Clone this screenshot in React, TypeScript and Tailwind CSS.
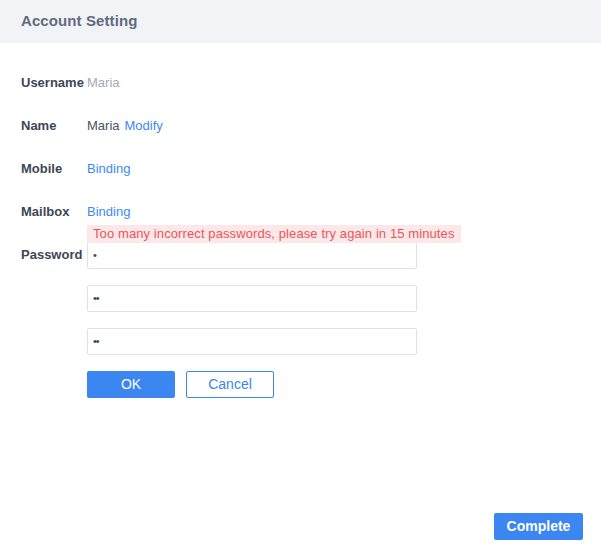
import React from "react";

const font = { fontFamily: '"Liberation Sans", Arial, sans-serif' };

function Row({ label, children }: { label: string; children: React.ReactNode }) {
  return (
    <div className="flex items-center h-[43px] text-[13px]">
      <span className="min-w-[66px] font-bold text-[#3d4656] whitespace-nowrap">{label}</span>
      {children}
    </div>
  );
}

function PasswordBox({ dots }: { dots: string }) {
  return (
    <div className="w-[330px] h-[27px] border border-[#dfe2e8] rounded-[2px] bg-white flex items-center px-[5px] text-[11px] text-[#3d4656] tracking-[-1px]">
      {dots}
    </div>
  );
}

export default function App() {
  return (
    <div className="w-[601px] h-[547px] bg-white flex flex-col" style={font}>
      <div className="h-[43px] bg-[#f2f3f7] flex items-center px-[21px]">
        <h1 className="text-[15px] font-bold text-[#5f6b7e] tracking-[0.1px]">Account Setting</h1>
      </div>

      <div className="flex-1 px-[21px] pt-[18px]">
        <Row label="Username">
          <span className="text-[#a3aab6]">Maria</span>
        </Row>
        <Row label="Name">
          <span className="text-[#4a5263]">Maria</span>
          <span className="text-[#3d8af2] ml-[5px]">Modify</span>
        </Row>
        <Row label="Mobile">
          <span className="text-[#3d8af2]">Binding</span>
        </Row>
        <Row label="Mailbox">
          <span className="text-[#3d8af2]">Binding</span>
        </Row>

        <div className="flex mt-[9px] text-[13px]">
          <span className="w-[66px] h-[26px] flex items-center font-bold text-[#3d4656]">Password</span>
          <div className="flex flex-col gap-[16px]">
            <div className="relative">
              <div className="absolute -top-[17px] left-0 h-[18px] px-[6px] flex items-center bg-[#fde8e9] text-[#ef5359] whitespace-nowrap tracking-[0.1px] z-10">
                Too many incorrect passwords, please try again in 15 minutes
              </div>
              <PasswordBox dots="•" />
            </div>
            <PasswordBox dots="••" />
            <PasswordBox dots="••" />
            <div className="flex gap-[11px]">
              <button className="w-[88px] h-[27px] rounded-[2px] bg-[#3b86f0] text-white text-[14px] font-medium">
                OK
              </button>
              <button className="w-[88px] h-[27px] rounded-[2px] border border-[#3b86f0] bg-white text-[#3b86f0] text-[14px]">
                Cancel
              </button>
            </div>
          </div>
        </div>
      </div>

      <div className="flex justify-end pr-[18px] pb-[7px]">
        <button className="w-[89px] h-[27px] rounded-[2px] bg-[#3b86f0] text-white text-[14px] font-bold">
          Complete
        </button>
      </div>
    </div>
  );
}
